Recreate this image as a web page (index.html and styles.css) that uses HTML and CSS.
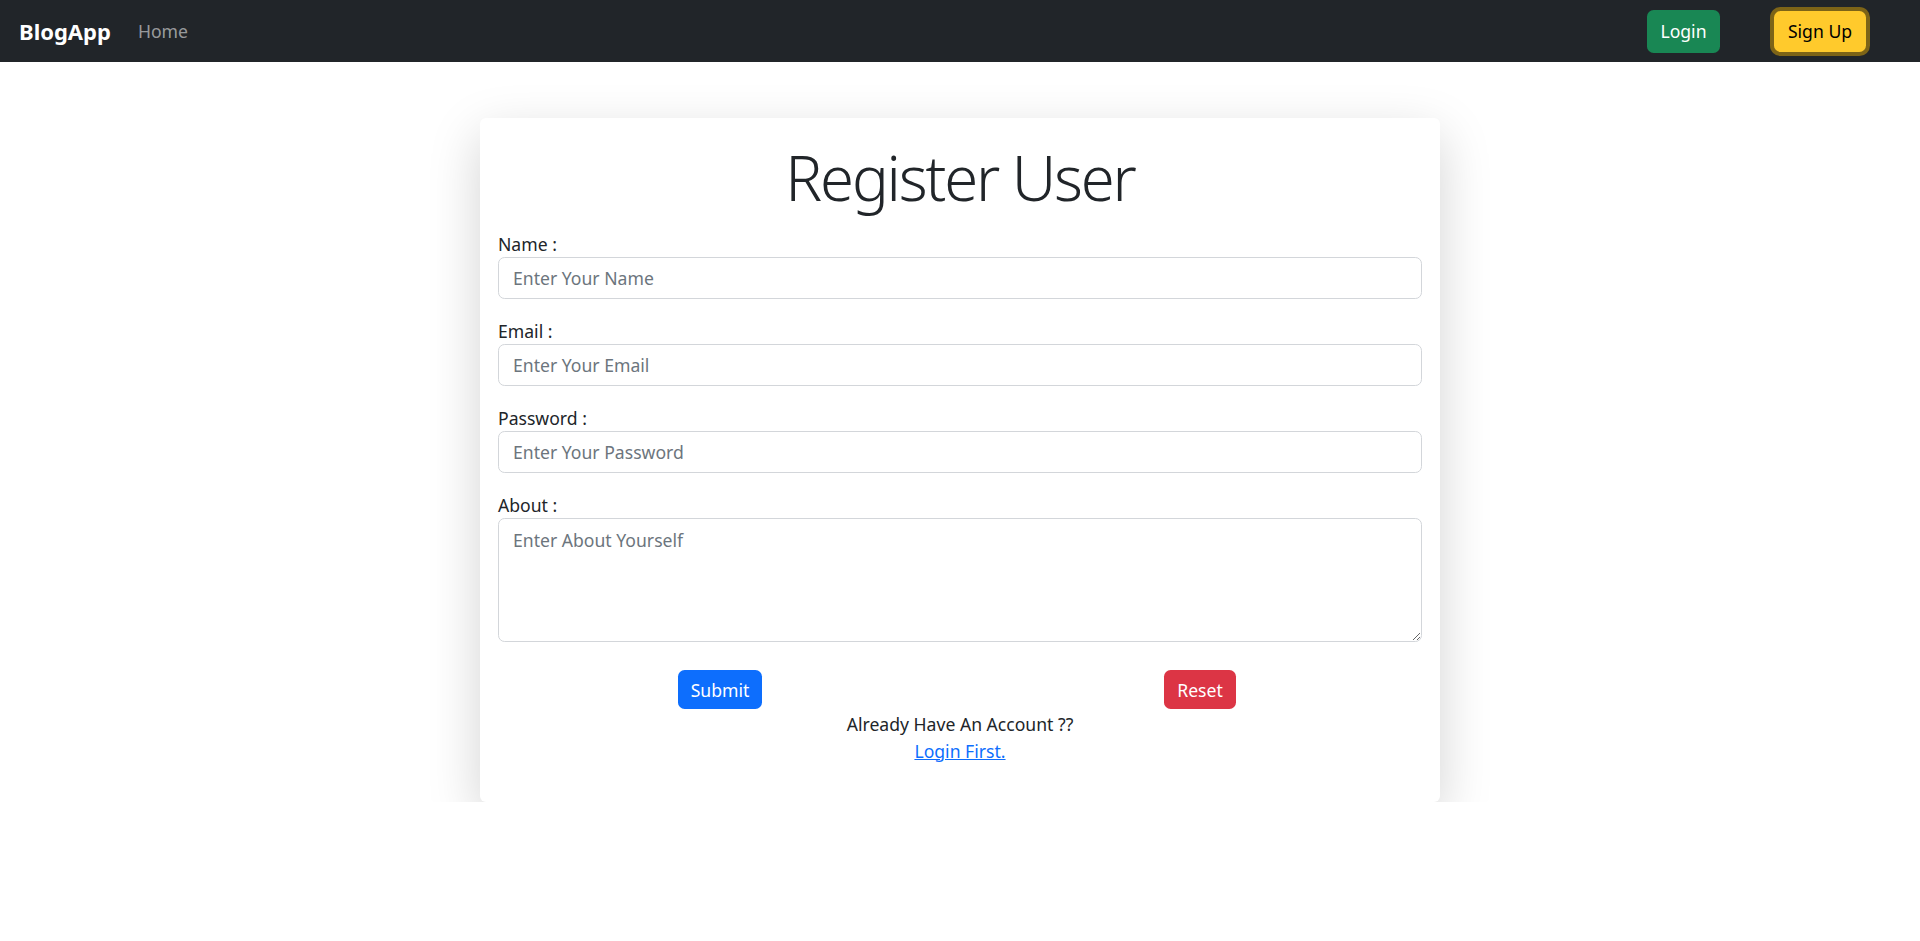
FILE: index.html
```html
<!DOCTYPE html>
<html lang="en">
<head>
	<meta charset="UTF-8">
	<title>BlogApp - Register</title>
	<link rel="stylesheet" href="styles.css">
</head>
<body>
	<nav class="navbar">
		<a href="#" class="brand">BlogApp</a>
		<a href="#" class="nav-link">Home</a>
		<div class="nav-right">
			<a href="#" class="btn btn-login">Login</a>
			<a href="#" class="btn btn-signup">Sign Up</a>
		</div>
	</nav>

	<div class="card">
		<h1 class="title">Register User</h1>
		<form>
			<div class="form-group">
				<label for="name">Name :</label>
				<input type="text" id="name" class="form-control" placeholder="Enter Your Name">
			</div>
			<div class="form-group">
				<label for="email">Email :</label>
				<input type="email" id="email" class="form-control" placeholder="Enter Your Email">
			</div>
			<div class="form-group">
				<label for="password">Password :</label>
				<input type="password" id="password" class="form-control" placeholder="Enter Your Password">
			</div>
			<div class="form-group">
				<label for="about">About :</label>
				<textarea id="about" class="form-control about" placeholder="Enter About Yourself"></textarea>
			</div>
			<div class="btn-row">
				<div class="btn-col"><button type="submit" class="btn btn-submit">Submit</button></div>
				<div class="btn-col"><button type="reset" class="btn btn-reset">Reset</button></div>
			</div>
		</form>
		<div class="account">
			<p>Already Have An Account ??</p>
			<a href="#">Login First.</a>
		</div>
	</div>
</body>
</html>
```

FILE: styles.css
```css
body,p,h1,form{
	margin: 0;
	padding: 0;
}
body{
	font-family: "Noto Sans", "Liberation Sans", sans-serif;
	font-size: 17.6px;
	line-height: 1.5;
	color: #212529;
	background: #fff;
}
a{
	text-decoration: none;
}
.navbar{
	display: flex;
	align-items: center;
	height: 62px;
	padding: 0 54px 0 19px;
	background: #212529;
}
.navbar .brand{
	font-size: 22px;
	font-weight: bold;
	color: #fff;
	margin-right: 27px;
}
.navbar .nav-link{
	color: rgba(255,255,255,.55);
}
.navbar .nav-right{
	display: flex;
	align-items: center;
	gap: 54px;
	margin-left: auto;
}
.btn{
	display: inline-flex;
	align-items: center;
	justify-content: center;
	height: 42px;
	padding: 0 13px;
	border: none;
	border-radius: 6.6px;
	font-family: inherit;
	font-size: 17.6px;
	cursor: pointer;
}
.btn-login{
	width: 73px;
	height: 43px;
	padding: 0;
	background: #198754;
	color: #fff;
}
.btn-signup{
	width: 92px;
	height: 41px;
	padding: 0;
	background: #ffca2c;
	color: #000;
	box-shadow: 0 0 0 4px #7d6417;
}
.card{
	width: 924px;
	margin: 56px auto 0;
	padding: 18px 18px 38px;
	background: #fff;
	border-radius: 6px;
	box-shadow: 0 17px 52px rgba(0,0,0,.175);
}
.title{
	font-size: 61.6px;
	font-weight: 300;
	line-height: 1.2;
	letter-spacing: -2.2px;
	text-align: center;
	padding-top: 5px;
	margin-bottom: 16px;
}
.form-group{
	margin-bottom: 18.6px;
}
.form-group label{
	display: block;
}
.form-control{
	display: block;
	box-sizing: border-box;
	width: 100%;
	height: 42px;
	padding: 0 14px;
	border: 1px solid #d3d6da;
	border-radius: 6.6px;
	font-family: inherit;
	font-size: 17.6px;
	color: #212529;
}
.form-control::placeholder{
	color: #6c757d;
}
.about{
	height: 124px;
	padding: 8px 14px;
	line-height: 1.5;
}
.btn-row{
	display: flex;
	margin: 28px -18px 0;
}
.btn-col{
	flex: 1;
	display: flex;
	justify-content: center;
}
.btn-submit{
	height: 39px;
	background: #0d6efd;
	color: #fff;
}
.btn-reset{
	height: 39px;
	background: #dc3545;
	color: #fff;
}
.account{
	text-align: center;
	margin-top: 2px;
}
.account a{
	color: #0d6efd;
	text-decoration: underline;
}
```
